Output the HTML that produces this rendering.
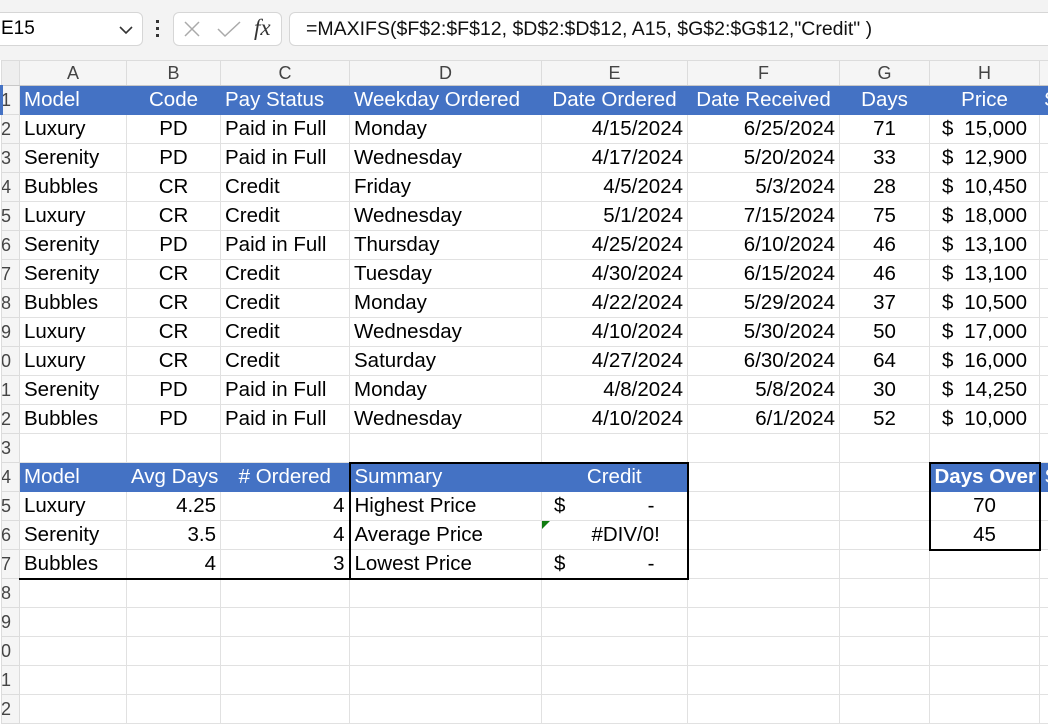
<!DOCTYPE html>
<html><head><meta charset="utf-8"><style>
*{margin:0;padding:0;box-sizing:border-box}
body{width:1048px;height:714px;overflow:hidden;background:#fff;font-family:"Liberation Sans",sans-serif;position:relative}
#tb{position:absolute;left:0;top:0;width:1048px;height:60px;background:#f3f3f3}
.box{position:absolute;background:#fff;border:1px solid #d6d6d6;border-radius:6px;top:12px;height:34px}
#grid{position:absolute;left:0;top:60px;width:1078px;border-collapse:collapse;table-layout:fixed;font-size:20.5px;color:#000}
#grid td{border:1px solid #e1e1e1;height:29px;padding:0 4px;white-space:nowrap;overflow:hidden;line-height:26px}
#grid tr.ch td{height:25px;line-height:22px;background:#f5f5f5;color:#444;text-align:center;font-size:18px;border-color:#dcdcdc;border-bottom:1px solid #c8c8c8}
#grid td.rh{background:#f5f5f5;color:#444;text-align:right;padding:0 8px 0 0;font-size:18px;text-indent:-20px;border-color:#dcdcdc}
.b{background:#4472c4;color:#fff;border-color:#4472c4 !important}
.c{text-align:center}.r{text-align:right}
.acc{display:flex;justify-content:space-between;padding:0 8px 0 8px !important}
.bt{border-top:2px solid #000 !important}.bb{border-bottom:2px solid #000 !important}
.bl{border-left:2px solid #000 !important}.br{border-right:2px solid #000 !important}
</style></head><body>
<div id="tb">
 <div class="box" style="left:-10px;width:153px"><span style="position:absolute;left:10px;top:5px;font-size:19px">E15</span>
  <svg style="position:absolute;left:128px;top:12px" width="14" height="10"><path d="M1 2 L7 8 L13 2" stroke="#333" stroke-width="1.6" fill="none"/></svg></div>
 <div style="position:absolute;left:156px;top:20px;width:3px;height:18px">
  <div style="width:3px;height:3px;background:#333;margin-bottom:4px"></div><div style="width:3px;height:3px;background:#333;margin-bottom:4px"></div><div style="width:3px;height:3px;background:#333"></div></div>
 <div class="box" style="left:173px;width:109px">
  <svg style="position:absolute;left:8px;top:6px" width="20" height="20"><path d="M3 3 L17 17 M17 3 L3 17" stroke="#aaa" stroke-width="1.5"/></svg>
  <svg style="position:absolute;left:42px;top:6px" width="26" height="20"><path d="M2 10 L9 17 L24 3" stroke="#aaa" stroke-width="1.5" fill="none"/></svg>
  <span style="position:absolute;left:80px;top:2px;font-family:'Liberation Serif',serif;font-style:italic;font-size:23px;color:#333">fx</span></div>
 <div class="box" style="left:289px;width:780px"><span style="position:absolute;left:16px;top:5px;font-size:19.5px;color:#111">=MAXIFS($F$2:$F$12, $D$2:$D$12, A15, $G$2:$G$12,"Credit" )</span></div>
</div>
<table id="grid">
<colgroup><col style="width:18px"><col style="width:107px"><col style="width:94px"><col style="width:129px"><col style="width:192px"><col style="width:146px"><col style="width:152px"><col style="width:90px"><col style="width:110px"><col style="width:40px"></colgroup>
<tr class="ch"><td style="background:#eee"></td><td>A</td><td>B</td><td>C</td><td>D</td><td>E</td><td>F</td><td>G</td><td>H</td><td>I</td></tr>
<tr><td class="rh" style="border-left:3px solid #4472c4">1</td><td class="b">Model</td><td class="b c">Code</td><td class="b">Pay Status</td><td class="b">Weekday Ordered</td><td class="b c">Date Ordered</td><td class="b c">Date Received</td><td class="b c">Days</td><td class="b c">Price</td><td class="b">S</td></tr>
<tr><td class="rh">2</td><td>Luxury</td><td class="c">PD</td><td>Paid in Full</td><td>Monday</td><td class="r">4/15/2024</td><td class="r">6/25/2024</td><td class="c">71</td><td><div class="acc"><span>$</span><span>15,000</span></div></td><td></td></tr>
<tr><td class="rh">3</td><td>Serenity</td><td class="c">PD</td><td>Paid in Full</td><td>Wednesday</td><td class="r">4/17/2024</td><td class="r">5/20/2024</td><td class="c">33</td><td><div class="acc"><span>$</span><span>12,900</span></div></td><td></td></tr>
<tr><td class="rh">4</td><td>Bubbles</td><td class="c">CR</td><td>Credit</td><td>Friday</td><td class="r">4/5/2024</td><td class="r">5/3/2024</td><td class="c">28</td><td><div class="acc"><span>$</span><span>10,450</span></div></td><td></td></tr>
<tr><td class="rh">5</td><td>Luxury</td><td class="c">CR</td><td>Credit</td><td>Wednesday</td><td class="r">5/1/2024</td><td class="r">7/15/2024</td><td class="c">75</td><td><div class="acc"><span>$</span><span>18,000</span></div></td><td></td></tr>
<tr><td class="rh">6</td><td>Serenity</td><td class="c">PD</td><td>Paid in Full</td><td>Thursday</td><td class="r">4/25/2024</td><td class="r">6/10/2024</td><td class="c">46</td><td><div class="acc"><span>$</span><span>13,100</span></div></td><td></td></tr>
<tr><td class="rh">7</td><td>Serenity</td><td class="c">CR</td><td>Credit</td><td>Tuesday</td><td class="r">4/30/2024</td><td class="r">6/15/2024</td><td class="c">46</td><td><div class="acc"><span>$</span><span>13,100</span></div></td><td></td></tr>
<tr><td class="rh">8</td><td>Bubbles</td><td class="c">CR</td><td>Credit</td><td>Monday</td><td class="r">4/22/2024</td><td class="r">5/29/2024</td><td class="c">37</td><td><div class="acc"><span>$</span><span>10,500</span></div></td><td></td></tr>
<tr><td class="rh">9</td><td>Luxury</td><td class="c">CR</td><td>Credit</td><td>Wednesday</td><td class="r">4/10/2024</td><td class="r">5/30/2024</td><td class="c">50</td><td><div class="acc"><span>$</span><span>17,000</span></div></td><td></td></tr>
<tr><td class="rh">10</td><td>Luxury</td><td class="c">CR</td><td>Credit</td><td>Saturday</td><td class="r">4/27/2024</td><td class="r">6/30/2024</td><td class="c">64</td><td><div class="acc"><span>$</span><span>16,000</span></div></td><td></td></tr>
<tr><td class="rh">11</td><td>Serenity</td><td class="c">PD</td><td>Paid in Full</td><td>Monday</td><td class="r">4/8/2024</td><td class="r">5/8/2024</td><td class="c">30</td><td><div class="acc"><span>$</span><span>14,250</span></div></td><td></td></tr>
<tr><td class="rh">12</td><td>Bubbles</td><td class="c">PD</td><td>Paid in Full</td><td>Wednesday</td><td class="r">4/10/2024</td><td class="r">6/1/2024</td><td class="c">52</td><td><div class="acc"><span>$</span><span>10,000</span></div></td><td></td></tr>
<tr><td class="rh">13</td><td></td><td></td><td></td><td></td><td></td><td></td><td></td><td></td><td></td></tr>
<tr><td class="rh">14</td><td class="b">Model</td><td class="b r">Avg Days</td><td class="b c"># Ordered</td><td class="b bt bl">Summary</td><td class="b c bt br">Credit</td><td></td><td></td><td class="b c bt bl br" style="font-weight:bold">Days Over</td><td class="b">S</td></tr>
<tr><td class="rh">15</td><td>Luxury</td><td class="r">4.25</td><td class="r">4</td><td class="bl">Highest Price</td><td class="br"><div class="acc" style="padding-right:28px !important"><span>$</span><span>-</span></div></td><td></td><td></td><td class="c bl br">70</td><td></td></tr>
<tr><td class="rh">16</td><td>Serenity</td><td class="r">3.5</td><td class="r">4</td><td class="bl">Average Price</td><td class="br c" style="position:relative"><svg style="position:absolute;left:0;top:0" width="8" height="8"><path d="M0 0 H8 L0 8Z" fill="#107c10"/></svg>&nbsp;&nbsp;&nbsp;&nbsp;#DIV/0!</td><td></td><td></td><td class="c bl br bb">45</td><td></td></tr>
<tr><td class="rh">17</td><td class="bb">Bubbles</td><td class="r bb">4</td><td class="r bb">3</td><td class="bl bb">Lowest Price</td><td class="br bb"><div class="acc" style="padding-right:28px !important"><span>$</span><span>-</span></div></td><td></td><td></td><td></td><td></td></tr>
<tr><td class="rh">18</td><td></td><td></td><td></td><td></td><td></td><td></td><td></td><td></td><td></td></tr>
<tr><td class="rh">19</td><td></td><td></td><td></td><td></td><td></td><td></td><td></td><td></td><td></td></tr>
<tr><td class="rh">20</td><td></td><td></td><td></td><td></td><td></td><td></td><td></td><td></td><td></td></tr>
<tr><td class="rh">21</td><td></td><td></td><td></td><td></td><td></td><td></td><td></td><td></td><td></td></tr>
<tr><td class="rh">22</td><td></td><td></td><td></td><td></td><td></td><td></td><td></td><td></td><td></td></tr>
</table>
</body></html>
